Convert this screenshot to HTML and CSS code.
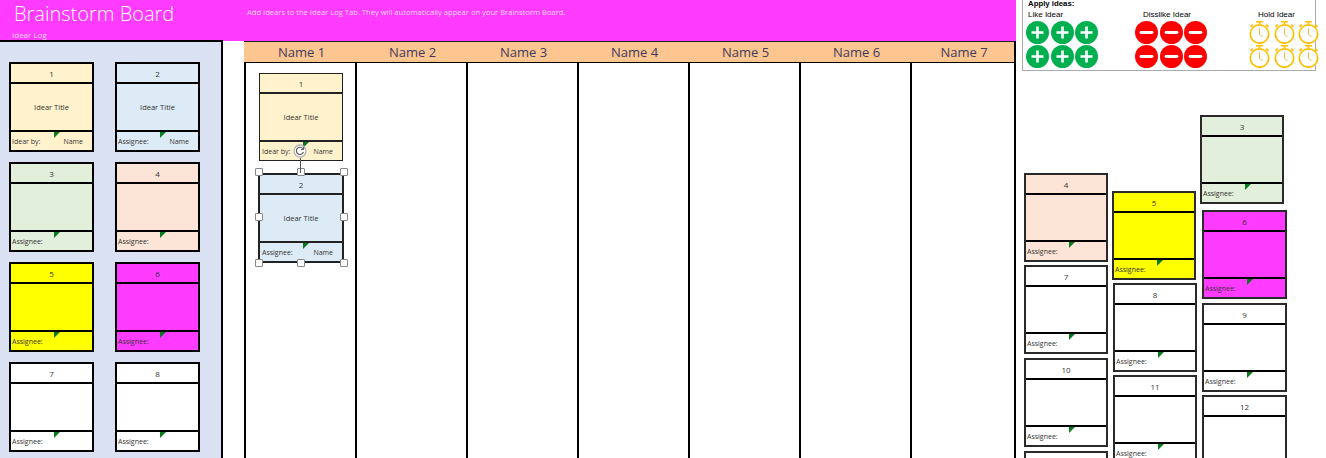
FILE: index.html
```html
<!DOCTYPE html>
<html lang="en">
<head>
  <meta charset="UTF-8" />
  <title>Brainstorm Board</title>
  <link rel="stylesheet" href="styles.css">
</head>
<body>
  <svg class="icon-defs" width="0" height="0">
    <symbol id="icon-plus" viewBox="0 0 23 23">
      <circle cx="11.5" cy="11.5" r="11.5" fill="#00b050"/>
      <path d="M11.5 5.5v12M5.5 11.5h12" stroke="#fff" stroke-width="2.6" fill="none"/>
    </symbol>
    <symbol id="icon-minus" viewBox="0 0 23 23">
      <circle cx="11.5" cy="11.5" r="11.5" fill="#ff0000"/>
      <path d="M6 11.5h11" stroke="#fff" stroke-width="2.8" stroke-linecap="round" fill="none"/>
    </symbol>
    <symbol id="icon-watch" viewBox="0 0 23 23">
      <circle cx="11.5" cy="13" r="9.2" fill="#fff" stroke="#ffc000" stroke-width="1.7"/>
      <path d="M8 .8h7M11.5 .8v3.2M18.2 3.6l2.3 2.3M4.8 3.6L2.5 5.9" stroke="#ffc000" stroke-width="1.6" fill="none"/>
      <path d="M11.5 7.5v5.5l3 3" stroke="#e0b030" stroke-width=".9" fill="none"/>
    </symbol>
  </svg>

  <div class="page">
    <div class="main">
      <header class="top-bar">
        <div class="top-row">
          <h1 class="page-title">Brainstorm Board</h1>
          <p class="page-note">Add Idears to the Idear Log Tab. They will automatically appear on your Brainstorm Board.</p>
        </div>
        <div class="tab-name">Idear Log</div>
      </header>

      <div class="work-area">
        <!-- Idear log -->
        <aside class="log-panel">
          <div class="card card-cream">
            <div class="card-num">1</div>
            <div class="card-title">Idear Title</div>
            <div class="card-foot"><span>Idear by:</span><span class="card-name">Name</span><i class="flag"></i></div>
          </div>
          <div class="card card-blue">
            <div class="card-num">2</div>
            <div class="card-title">Idear Title</div>
            <div class="card-foot"><span>Assignee:</span><span class="card-name">Name</span><i class="flag"></i></div>
          </div>
          <div class="card card-green">
            <div class="card-num">3</div>
            <div class="card-title"></div>
            <div class="card-foot"><span>Assignee:</span><i class="flag"></i></div>
          </div>
          <div class="card card-peach">
            <div class="card-num">4</div>
            <div class="card-title"></div>
            <div class="card-foot"><span>Assignee:</span><i class="flag"></i></div>
          </div>
          <div class="card card-yellow">
            <div class="card-num">5</div>
            <div class="card-title"></div>
            <div class="card-foot"><span>Assignee:</span><i class="flag"></i></div>
          </div>
          <div class="card card-pink">
            <div class="card-num">6</div>
            <div class="card-title"></div>
            <div class="card-foot"><span>Assignee:</span><i class="flag"></i></div>
          </div>
          <div class="card">
            <div class="card-num">7</div>
            <div class="card-title"></div>
            <div class="card-foot"><span>Assignee:</span><i class="flag"></i></div>
          </div>
          <div class="card">
            <div class="card-num">8</div>
            <div class="card-title"></div>
            <div class="card-foot"><span>Assignee:</span><i class="flag"></i></div>
          </div>
        </aside>

        <!-- Board -->
        <section class="board">
          <div class="board-col">
            <div class="col-name">Name 1</div>
            <div class="col-body first-col">
              <div class="card card-thin card-cream">
                <div class="card-num">1</div>
                <div class="card-title">Idear Title</div>
                <div class="card-foot"><span>Idear by:</span><span class="card-name">Name</span><i class="flag"></i></div>
                <div class="rotate-handle">
                  <svg width="14" height="14" viewBox="0 0 14 14">
                    <circle cx="7" cy="7" r="6" fill="#fff" stroke="#b5b5b5" stroke-width="1.4"/>
                    <path d="M9.9 4.8A3.6 3.6 0 1 0 10.4 8" fill="none" stroke="#555" stroke-width="1.1"/>
                    <path d="M10.6 3v2.6H8" fill="none" stroke="#555" stroke-width="1"/>
                  </svg>
                </div>
              </div>
              <div class="card card-thin card-blue card-selected">
                <div class="card-num">2</div>
                <div class="card-title">Idear Title</div>
                <div class="card-foot"><span>Assignee:</span><span class="card-name">Name</span><i class="flag"></i></div>
                <i class="handle h-tl"></i><i class="handle h-tc"></i><i class="handle h-tr"></i>
                <i class="handle h-ml"></i><i class="handle h-mr"></i>
                <i class="handle h-bl"></i><i class="handle h-bc"></i><i class="handle h-br"></i>
              </div>
            </div>
          </div>
          <div class="board-col"><div class="col-name">Name 2</div><div class="col-body"></div></div>
          <div class="board-col"><div class="col-name">Name 3</div><div class="col-body"></div></div>
          <div class="board-col"><div class="col-name">Name 4</div><div class="col-body"></div></div>
          <div class="board-col"><div class="col-name">Name 5</div><div class="col-body"></div></div>
          <div class="board-col"><div class="col-name">Name 6</div><div class="col-body"></div></div>
          <div class="board-col"><div class="col-name">Name 7</div><div class="col-body"></div></div>
        </section>
      </div>
    </div>

    <div class="side">
      <div class="apply-box">
        <div class="apply-head">Apply ideas:</div>
        <div class="apply-groups">
          <div class="apply-group group-like">
            <div class="apply-label">Like Idear</div>
            <div class="icon-grid">
              <svg><use href="#icon-plus"/></svg><svg><use href="#icon-plus"/></svg><svg><use href="#icon-plus"/></svg>
              <svg><use href="#icon-plus"/></svg><svg><use href="#icon-plus"/></svg><svg><use href="#icon-plus"/></svg>
            </div>
          </div>
          <div class="apply-group group-dislike">
            <div class="apply-label">Disslike Idear</div>
            <div class="icon-grid">
              <svg><use href="#icon-minus"/></svg><svg><use href="#icon-minus"/></svg><svg><use href="#icon-minus"/></svg>
              <svg><use href="#icon-minus"/></svg><svg><use href="#icon-minus"/></svg><svg><use href="#icon-minus"/></svg>
            </div>
          </div>
          <div class="apply-group group-hold">
            <div class="apply-label">Hold Idear</div>
            <div class="icon-grid">
              <svg><use href="#icon-watch"/></svg><svg><use href="#icon-watch"/></svg><svg><use href="#icon-watch"/></svg>
              <svg><use href="#icon-watch"/></svg><svg><use href="#icon-watch"/></svg><svg><use href="#icon-watch"/></svg>
            </div>
          </div>
        </div>
      </div>

      <!-- loose cards sitting on the sheet -->
      <div class="card card-loose card-green at-3"><div class="card-num">3</div><div class="card-title"></div><div class="card-foot"><span>Assignee:</span><i class="flag"></i></div></div>
      <div class="card card-loose card-peach at-4"><div class="card-num">4</div><div class="card-title"></div><div class="card-foot"><span>Assignee:</span><i class="flag"></i></div></div>
      <div class="card card-loose card-yellow at-5"><div class="card-num">5</div><div class="card-title"></div><div class="card-foot"><span>Assignee:</span><i class="flag"></i></div></div>
      <div class="card card-loose card-pink at-6"><div class="card-num">6</div><div class="card-title"></div><div class="card-foot"><span>Assignee:</span><i class="flag"></i></div></div>
      <div class="card card-loose at-7"><div class="card-num">7</div><div class="card-title"></div><div class="card-foot"><span>Assignee:</span><i class="flag"></i></div></div>
      <div class="card card-loose at-8"><div class="card-num">8</div><div class="card-title"></div><div class="card-foot"><span>Assignee:</span><i class="flag"></i></div></div>
      <div class="card card-loose at-9"><div class="card-num">9</div><div class="card-title"></div><div class="card-foot"><span>Assignee:</span><i class="flag"></i></div></div>
      <div class="card card-loose at-10"><div class="card-num">10</div><div class="card-title"></div><div class="card-foot"><span>Assignee:</span><i class="flag"></i></div></div>
      <div class="card card-loose at-11"><div class="card-num">11</div><div class="card-title"></div><div class="card-foot"><span>Assignee:</span><i class="flag"></i></div></div>
      <div class="card card-loose at-12"><div class="card-num">12</div><div class="card-title"></div><div class="card-foot"><span>Assignee:</span><i class="flag"></i></div></div>
      <div class="card card-loose at-13"><div class="card-num"></div><div class="card-title"></div><div class="card-foot"></div></div>
    </div>
  </div>
</body>
</html>
```

FILE: styles.css
```css
html, body {
  margin: 0;
  height: 100%;
  overflow: hidden;
  background-color: white;
  font-family: "Open Sans", "Noto Sans", sans-serif;
  color: #333;
}

.icon-defs {
  display: block;
  height: 0;
}

.page {
  display: flex;
  width: 1326px;
  height: 458px;
  overflow: hidden;
}

.main {
  width: 1016px;
  flex: none;
  display: flex;
  flex-direction: column;
}

/* top bar */
.top-bar {
  height: 41px;
  flex: none;
  background-color: #ff3bff;
  color: #ffd9ff;
  display: flex;
  flex-direction: column;
}

.top-row {
  display: flex;
  align-items: center;
  height: 29px;
}

.page-title {
  margin: 0 0 3px;
  width: 247px;
  padding-left: 14px;
  box-sizing: border-box;
  font-size: 20px;
  font-weight: 300;
  color: white;
  white-space: nowrap;
}

.page-note {
  margin: 0 0 5px;
  font-size: 7.6px;
  white-space: nowrap;
}

.tab-name {
  padding-left: 12px;
  font-size: 8px;
  line-height: 12px;
}

.work-area {
  flex: 1;
  display: flex;
  min-height: 0;
}

/* left log */
.log-panel {
  width: 223px;
  flex: none;
  box-sizing: border-box;
  background-color: #d9e1f2;
  border-top: 2px solid black;
  border-right: 2px solid black;
  margin-top: -1px;
  padding: 20px 0 0 9px;
  display: grid;
  grid-template-columns: repeat(2, 85px);
  grid-auto-rows: 90px;
  column-gap: 21px;
  row-gap: 10px;
}

/* cards */
.card {
  position: relative;
  box-sizing: border-box;
  width: 85px;
  height: 90px;
  display: grid;
  grid-template-rows: 20px 1fr 20px;
  border: 2px solid black;
  background-color: white;
  font-size: 7.5px;
}

.card-num {
  display: flex;
  align-items: center;
  justify-content: center;
  border-bottom: 2px solid black;
  font-size: 8px;
}

.card-title {
  display: flex;
  align-items: center;
  justify-content: center;
}

.card-foot {
  position: relative;
  display: flex;
  align-items: center;
  padding-left: 1px;
  border-top: 2px solid black;
  font-size: 7px;
}

.card-name {
  position: absolute;
  right: 9px;
}

.flag {
  position: absolute;
  left: 43px;
  top: 0;
  width: 6px;
  height: 6px;
  background-color: #0a7a1f;
  clip-path: polygon(0 0, 100% 0, 0 100%);
}

.card-cream { background-color: #fff2cc; }
.card-blue { background-color: #ddebf7; }
.card-green { background-color: #e2efda; }
.card-peach { background-color: #fce4d6; }
.card-yellow { background-color: #ffff00; }
.card-pink { background-color: #ff3bff; }

.card-thin {
  width: 84px;
  height: 88px;
  border-width: 1px;
  border-color: #222;
}

.card-thin .card-num,
.card-thin .card-foot {
  border-color: #222;
}

.card-thin .card-foot {
  padding-left: 2px;
}

/* board */
.board {
  margin-left: 21px;
  flex: 1;
  display: grid;
  grid-template-columns: repeat(6, 111px) 1fr;
  min-width: 0;
}

.board-col {
  display: flex;
  flex-direction: column;
  border-left: 2px solid black;
}

.board-col:last-child {
  border-right: 2px solid black;
}

.col-name {
  height: 22px;
  flex: none;
  background-color: #fdc590;
  color: #403a60;
  font-size: 13px;
  font-weight: 500;
  line-height: 21px;
  text-align: center;
  border-top: 1px solid #222;
  border-bottom: 1px solid black;
  box-sizing: border-box;
  margin-left: -2px;
  padding-left: 4px;
}

.col-body {
  flex: 1;
}

.first-col {
  display: flex;
  flex-direction: column;
  padding: 10px 0 0 13px;
  gap: 12px;
}

/* selection handles */
.card-selected {
  margin-left: -1px;
  width: 86px;
  height: 90px;
  border-width: 2px;
}

.handle {
  position: absolute;
  width: 6px;
  height: 6px;
  background-color: white;
  border: 1px solid #888;
  border-radius: 1px;
  z-index: 2;
}

.h-tl { left: -5px; top: -7px; }
.h-tc { left: 37px; top: -7px; }
.h-tr { right: -6px; top: -7px; }
.h-ml { left: -5px; top: 38px; }
.h-mr { right: -6px; top: 38px; }
.h-bl { left: -5px; bottom: -6px; }
.h-bc { left: 37px; bottom: -6px; }
.h-br { right: -6px; bottom: -6px; }

.rotate-handle {
  position: absolute;
  left: 33px;
  top: 70px;
  width: 14px;
  height: 14px;
  z-index: 3;
}

.rotate-handle svg {
  display: block;
}

.rotate-handle::after {
  content: "";
  position: absolute;
  left: 7px;
  top: 14px;
  width: 1px;
  height: 15px;
  background-color: #555;
}

/* right side */
.side {
  position: relative;
  flex: 1;
}

.apply-box {
  position: absolute;
  left: 6px;
  top: 0;
  width: 294px;
  height: 71px;
  box-sizing: border-box;
  border: 1px solid #aaa;
  border-top: 0;
  font-family: "Liberation Sans", Arial, sans-serif;
  font-size: 8px;
  color: black;
  padding-left: 3px;
}

.apply-head {
  font-weight: bold;
  font-size: 7.8px;
  line-height: 8px;
  padding-left: 2px;
}

.apply-groups {
  display: flex;
  margin-top: 1px;
}

.apply-group {
  width: 73px;
  flex: none;
}

.group-dislike { margin-left: 36px; }
.group-hold { margin-left: 40px; }

.apply-label {
  line-height: 11px;
  padding-left: 2px;
}

.group-dislike .apply-label { padding-left: 8px; }
.group-hold .apply-label { padding-left: 10px; }

.icon-grid {
  display: grid;
  grid-template-columns: repeat(3, 23px);
  grid-auto-rows: 23px;
  column-gap: 1.5px;
  row-gap: 1px;
  margin-top: 1px;
}

.icon-grid svg {
  width: 23px;
  height: 23px;
  display: block;
}

.card-loose {
  position: absolute;
  width: 84px;
  height: 89px;
  border-color: #2a2a2a;
}

.card-loose .card-foot {
  padding-left: 1px;
}

.at-3 { left: 184px; top: 115px; }
.at-4 { left: 8px; top: 173px; }
.at-5 { left: 96px; top: 191px; }
.at-6 { left: 186px; top: 210px; width: 85px; }
.at-7 { left: 8px; top: 265px; }
.at-8 { left: 97px; top: 283px; }
.at-9 { left: 186px; top: 303px; width: 85px; }
.at-10 { left: 8px; top: 358px; }
.at-11 { left: 97px; top: 375px; }
.at-12 { left: 186px; top: 395px; width: 85px; }
.at-13 { left: 8px; top: 451px; }
```
